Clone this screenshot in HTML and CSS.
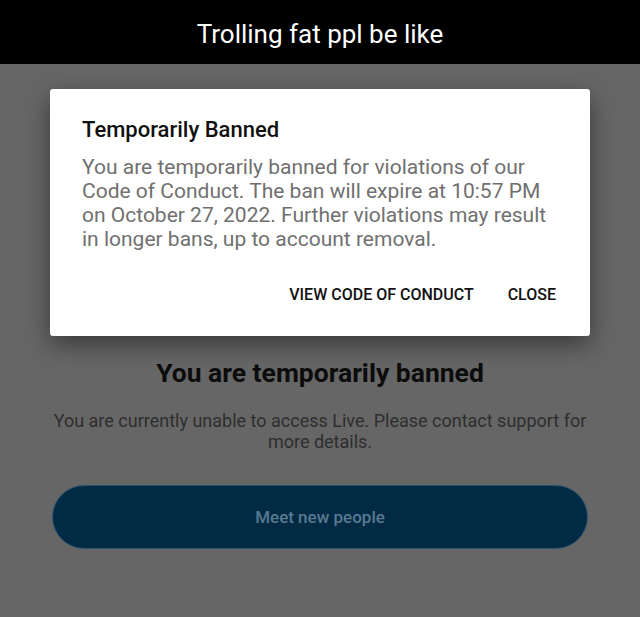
FILE: index.html
```html
<!DOCTYPE html>
<html lang="en">
<head>
    <meta charset="UTF-8">
    <meta name="viewport" content="width=device-width, initial-scale=1.0">
    <title>Trolling fat ppl be like</title>
    <link rel="stylesheet" href="styles.css">
</head>
<body>
    <header class="caption">Trolling fat ppl be like</header>

    <main class="screen">
        <section class="ban-page">
            <h1>You are temporarily banned</h1>
            <p>You are currently unable to access Live. Please contact support for more details.</p>
            <button class="meet-btn">Meet new people</button>
        </section>

        <div class="dialog">
            <h2>Temporarily Banned</h2>
            <p>You are temporarily banned for violations of our Code of Conduct. The ban will expire at 10:57 PM on October 27, 2022. Further violations may result in longer bans, up to account removal.</p>
            <div class="dialog-actions">
                <button>VIEW CODE OF CONDUCT</button>
                <button>CLOSE</button>
            </div>
        </div>
    </main>
</body>
</html>
```
FILE: styles.css
```css
body {
    font-family: Roboto, 'Liberation Sans', sans-serif;
    margin: 0;
    width: 640px;
    height: 617px;
    overflow: hidden;
    background-color: #666666;
    display: flex;
    flex-direction: column;
}

.caption {
    height: 64px;
    background-color: #000;
    color: #fff;
    font-size: 26px;
    display: flex;
    justify-content: center;
    align-items: center;
    padding-top: 3px;
    box-sizing: border-box;
}

.screen {
    position: relative;
    flex: 1;
}

.ban-page {
    padding: 292px 52px 0;
    text-align: center;
}

.ban-page h1 {
    margin: 0;
    font-size: 26.5px;
    font-weight: 700;
    color: #0c0c0c;
    line-height: 34px;
}

.ban-page p {
    margin: 20px 0 0;
    font-size: 18px;
    line-height: 21px;
    color: #2e2e2e;
}

.meet-btn {
    margin-top: 33px;
    width: 100%;
    height: 64px;
    border: 1px solid #2a5672;
    border-radius: 32px;
    background-color: #022a45;
    color: #587a90;
    font-family: inherit;
    font-size: 17px;
    font-weight: 500;
}

.dialog {
    position: absolute;
    top: 25px;
    left: 50px;
    width: 540px;
    height: 247px;
    box-sizing: border-box;
    padding: 27px 34px 0 32px;
    background-color: #fff;
    border-radius: 3px;
    box-shadow: 0px 8px 24px rgba(0, 0, 0, 0.45);
}

.dialog h2 {
    margin: 0;
    font-size: 22px;
    font-weight: 500;
    color: #111;
    line-height: 28px;
}

.dialog p {
    margin: 11px 0 0;
    font-size: 21px;
    line-height: 24px;
    color: #707070;
}

.dialog-actions {
    display: flex;
    justify-content: flex-end;
    gap: 34px;
    margin-top: 34px;
}

.dialog-actions button {
    background: none;
    border: none;
    padding: 0;
    font-family: inherit;
    font-size: 16px;
    font-weight: 500;
    color: #111;
}
```
